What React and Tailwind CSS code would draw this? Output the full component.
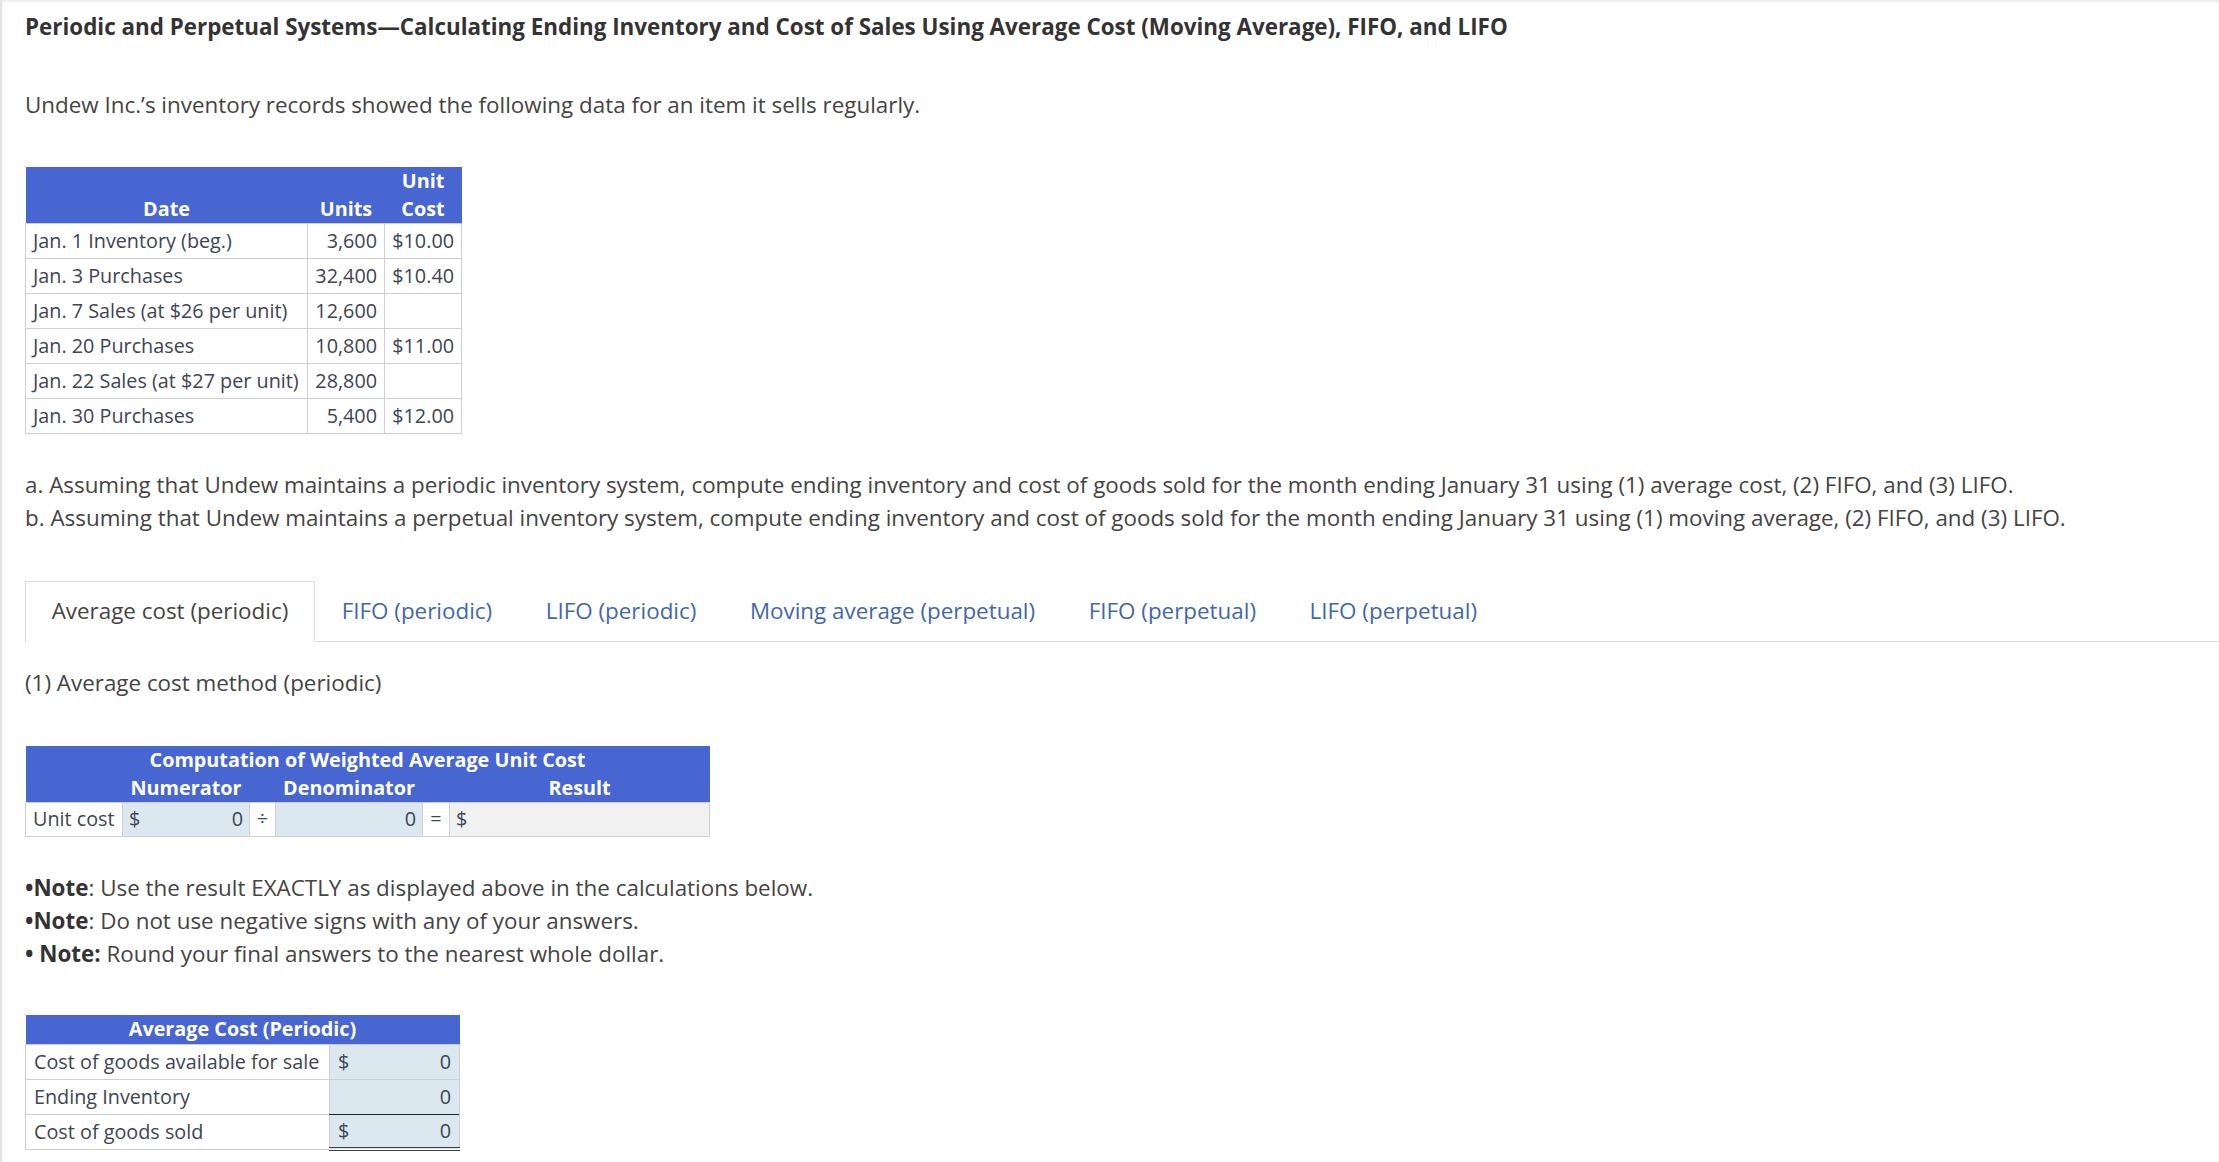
export default function App() {
  const inv = [
    ["Jan. 1 Inventory (beg.)", "3,600", "$10.00"],
    ["Jan. 3 Purchases", "32,400", "$10.40"],
    ["Jan. 7 Sales (at $26 per unit)", "12,600", ""],
    ["Jan. 20 Purchases", "10,800", "$11.00"],
    ["Jan. 22 Sales (at $27 per unit)", "28,800", ""],
    ["Jan. 30 Purchases", "5,400", "$12.00"],
  ];
  const tabs = [
    "FIFO (periodic)",
    "LIFO (periodic)",
    "Moving average (perpetual)",
    "FIFO (perpetual)",
    "LIFO (perpetual)",
  ];
  return (
    <div className="w-[2219px] h-[1162px] overflow-hidden bg-white border-l-2 border-[#e3e3e3] shadow-[inset_0_2px_3px_rgba(0,0,0,0.08)] pl-[23px] pt-[10px] font-['Open_Sans',sans-serif] text-[22.4px] leading-[33.9px] text-[#444]">
      <h1 className="font-bold text-[#333] text-[22.4px] leading-[33.9px]">
        Periodic and Perpetual Systems—Calculating Ending Inventory and Cost of Sales Using Average Cost (Moving Average), FIFO, and LIFO
      </h1>
      <p className="mt-[43.7px]">Undew Inc.’s inventory records showed the following data for an item it sells regularly.</p>

      <table className="mt-[45.5px] border-collapse table-fixed w-[436px] text-[19.8px] leading-[28px] text-[#3e4553]">
        <colgroup>
          <col className="w-[282px]" />
          <col className="w-[77px]" />
          <col className="w-[77px]" />
        </colgroup>
        <thead>
          <tr className="bg-[#4866d2] text-white">
            <th className="p-0 pb-[1px] align-bottom text-center font-bold leading-[27.5px]">Date</th>
            <th className="p-0 pb-[1px] align-bottom text-center font-bold leading-[27.5px]">Units</th>
            <th className="p-0 pb-[1px] align-bottom text-center font-bold leading-[27.5px]">Unit<br />Cost</th>
          </tr>
        </thead>
        <tbody>
          {inv.map((r, i) => (
            <tr key={i} className="h-[35px]">
              <td className="border border-[#cfcfcf] py-0 pl-[7px] whitespace-nowrap">{r[0]}</td>
              <td className="border border-[#cfcfcf] py-0 pr-[7px] text-right">{r[1]}</td>
              <td className="border border-[#cfcfcf] py-0 pr-[7px] text-right">{r[2]}</td>
            </tr>
          ))}
        </tbody>
      </table>

      <p className="mt-[33.5px]">a. Assuming that Undew maintains a periodic inventory system, compute ending inventory and cost of goods sold for the month ending January 31 using (1) average cost, (2) FIFO, and (3) LIFO.</p>
      <p>b. Assuming that Undew maintains a perpetual inventory system, compute ending inventory and cost of goods sold for the month ending January 31 using (1) moving average, (2) FIFO, and (3) LIFO.</p>

      <div className="mt-[45.6px] flex border-b border-[#dcdcdc]">
        <div className="-mb-px bg-white border border-b-0 border-[#dcdcdc] px-[25.7px] pt-[12.5px] pb-[13.5px] text-[#444] whitespace-nowrap">
          Average cost (periodic)
        </div>
        {tabs.map((t) => (
          <div key={t} className="px-[26.8px] pt-[13.5px] pb-[12.5px] text-[#4267ad] whitespace-nowrap">
            {t}
          </div>
        ))}
      </div>

      <p className="mt-[24.6px]">(1) Average cost method (periodic)</p>

      <table className="mt-[45.5px] border-collapse table-fixed w-[684px] text-[19.8px] leading-[28px] text-[#3e4553]">
        <colgroup>
          <col className="w-[97px]" />
          <col className="w-[127px]" />
          <col className="w-[26px]" />
          <col className="w-[147px]" />
          <col className="w-[27px]" />
          <col className="w-[260px]" />
        </colgroup>
        <thead className="bg-[#4866d2] text-white">
          <tr>
            <th colSpan={6} className="p-0 h-[28px] text-center font-bold whitespace-nowrap">Computation of Weighted Average Unit Cost</th>
          </tr>
          <tr>
            <th className="p-0 h-[28px]"></th>
            <th className="p-0 h-[28px] text-center font-bold">Numerator</th>
            <th className="p-0 h-[28px]"></th>
            <th className="p-0 h-[28px] text-center font-bold">Denominator</th>
            <th className="p-0 h-[28px]"></th>
            <th className="p-0 h-[28px] text-center font-bold">Result</th>
          </tr>
        </thead>
        <tbody>
          <tr className="h-[34px]">
            <td className="border border-[#cfcfcf] py-0 pl-[7px] whitespace-nowrap">Unit cost</td>
            <td className="border border-[#cfcfcf] bg-[#dbe8f0] py-0 px-[6px]">
              <div className="flex justify-between"><span>$</span><span>0</span></div>
            </td>
            <td className="border border-[#cfcfcf] p-0 text-center">÷</td>
            <td className="border border-[#cfcfcf] bg-[#dbe8f0] py-0 pr-[6px] text-right">0</td>
            <td className="border border-[#cfcfcf] p-0 text-center">=</td>
            <td className="border border-[#cfcfcf] bg-[#f1f1f1] py-0 pl-[6px]">$</td>
          </tr>
        </tbody>
      </table>

      <div className="mt-[34px] leading-[33.3px]">
        <p><b className="font-bold text-[#333]">•Note</b>: Use the result EXACTLY as displayed above in the calculations below.</p>
        <p><b className="font-bold text-[#333]">•Note</b>: Do not use negative signs with any of your answers.</p>
        <p><b className="font-bold text-[#333]">• Note:</b> Round your final answers to the nearest whole dollar.</p>
      </div>

      <table className="mt-[44.5px] border-collapse table-fixed w-[434px] text-[19.8px] leading-[28px] text-[#3e4553]">
        <colgroup>
          <col className="w-[304px]" />
          <col className="w-[130px]" />
        </colgroup>
        <thead>
          <tr className="bg-[#4866d2] text-white">
            <th colSpan={2} className="p-0 h-[29px] text-center font-bold">Average Cost (Periodic)</th>
          </tr>
        </thead>
        <tbody>
          <tr className="h-[35px]">
            <td className="border border-[#cfcfcf] py-0 pl-[8px] whitespace-nowrap">Cost of goods available for sale</td>
            <td className="border border-[#cfcfcf] bg-[#dbe8f0] py-0 px-[8px]">
              <div className="flex justify-between"><span>$</span><span>0</span></div>
            </td>
          </tr>
          <tr className="h-[35px]">
            <td className="border border-[#cfcfcf] py-0 pl-[8px]">Ending Inventory</td>
            <td className="border border-[#cfcfcf] border-b-[#222] bg-[#dbe8f0] py-0 pr-[8px] text-right">0</td>
          </tr>
          <tr className="h-[35px]">
            <td className="border border-[#cfcfcf] py-0 pl-[8px]">Cost of goods sold</td>
            <td className="border-x border-[#cfcfcf] border-t border-t-[#222] border-b-4 border-double border-b-[#3a3f4c] bg-[#dbe8f0] py-0 px-[8px]">
              <div className="flex justify-between"><span>$</span><span>0</span></div>
            </td>
          </tr>
        </tbody>
      </table>
    </div>
  );
}
